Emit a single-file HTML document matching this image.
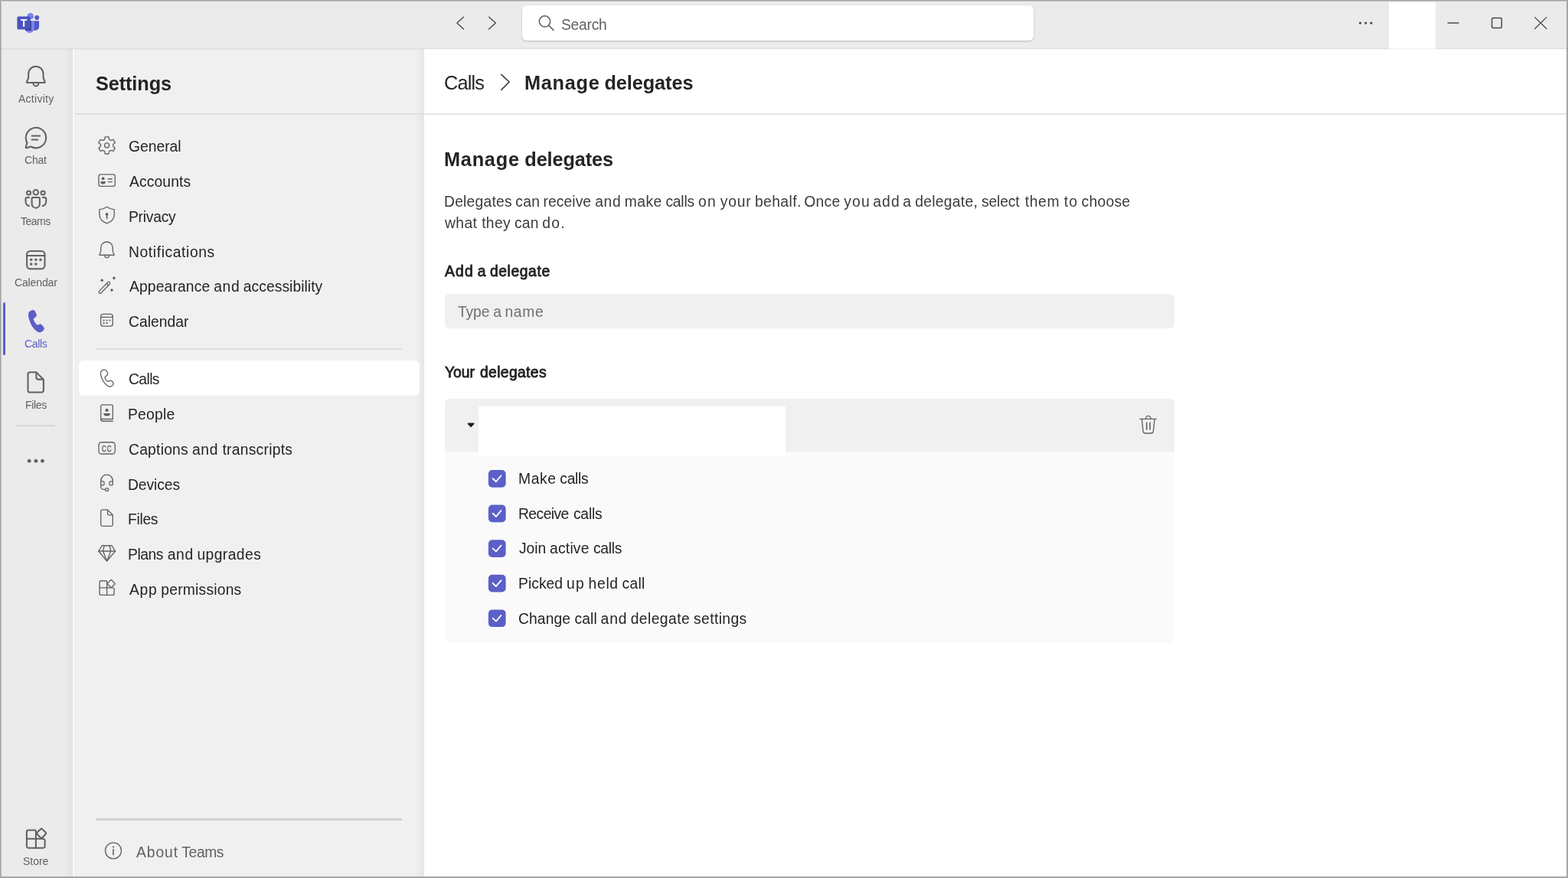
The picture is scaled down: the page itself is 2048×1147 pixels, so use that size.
<!DOCTYPE html>
<html lang="en">
<head>
<meta charset="utf-8">
<title>Settings - Calls - Manage delegates</title>
<style>
*{box-sizing:border-box;margin:0;padding:0}
html,body{width:2048px;height:1147px;overflow:hidden;background:#fff}
body{font-family:"Liberation Sans",sans-serif;color:#242424;position:relative;font-size:19.5px}
.a{position:absolute}
.t{position:absolute;white-space:nowrap;line-height:1;will-change:transform}
svg{position:absolute;overflow:visible}
#titlebar{left:0;top:0;width:2048px;height:64px;background:#ebebeb}
#tbline{left:0;top:62px;width:2048px;height:4px;background:linear-gradient(to bottom,rgba(0,0,0,.012) 0,rgba(0,0,0,.012) 1px,rgba(0,0,0,.05) 1px,rgba(0,0,0,.05) 2px,rgba(0,0,0,.025) 2px,rgba(0,0,0,.025) 3px,rgba(0,0,0,.008) 3px,rgba(0,0,0,.008) 4px);z-index:3}
#rail{left:0;top:64px;width:96px;height:1083px;background:linear-gradient(to right,#ebebeb 0,#ebebeb 84px,#e3e3e3 95px,#e3e3e3 96px)}
#panel{left:95px;top:64px;width:459px;height:1083px;background:linear-gradient(to right,#f9f9f9 0,#f9f9f9 1.5px,#f0f0f0 2.2px,#f0f0f0 447px,#e6e6e6 458.5px)}
#main{left:554px;top:64px;width:1494px;height:1083px;background:#fff}
.hl{height:2px;background:#e3e3e3}
.ck{left:637.9px;width:22.8px;height:22.8px;border-radius:5px;background:#5b5fc7}
#fT{left:0;top:0;width:2048px;height:2px;background:linear-gradient(to bottom,#a3a3a3 0,#a3a3a3 1px,#c4c4c4 1px,#c4c4c4 2px)}
#fL{left:0;top:0;width:2px;height:1147px;background:linear-gradient(to right,#a3a3a3 0,#a3a3a3 1px,#c0c0c0 1px,#c0c0c0 2px)}
#fB{left:0;top:1145px;width:2048px;height:2px;background:#a6a6a6}
#fR{left:2046px;top:0;width:2px;height:1147px;background:#a6a6a6}
</style>
</head>
<body>
<div class="a" id="titlebar"></div>
<div class="a" id="tbline"></div>
<div class="a" id="rail"></div>
<div class="a" id="panel"></div>
<div class="a" id="main"></div>

<!-- title bar -->
<div class="a" style="left:682px;top:7px;width:668px;height:46px;background:#fff;border-radius:6px;box-shadow:0 1px 2.5px rgba(0,0,0,.22)"></div>
<div class="t" style="left:732.98px;top:23px;font-size:19.3px;color:#616161;"><span style="letter-spacing:-0.274px;">Search</span></div>
<div class="a" style="left:1814px;top:2.6px;width:61.2px;height:61.4px;background:#fff"></div>
<!-- app rail -->
<div class="t" style="left:24.25px;top:122px;font-size:14px;color:#616161;"><span style="letter-spacing:0.264px;">Activity</span></div>
<div class="t" style="left:32.30px;top:202px;font-size:14px;color:#616161;"><span style="letter-spacing:-0.190px;">Chat</span></div>
<div class="t" style="left:27.25px;top:282px;font-size:14px;color:#616161;"><span style="letter-spacing:-0.484px;">Teams</span></div>
<div class="t" style="left:18.61px;top:362px;font-size:14px;color:#616161;"><span style="letter-spacing:-0.137px;">Calendar</span></div>
<div class="t" style="left:32.10px;top:442px;font-size:14px;color:#5b5fc7;"><span style="letter-spacing:-0.320px;">Calls</span></div>
<div class="t" style="left:32.50px;top:522px;font-size:14px;color:#616161;"><span style="letter-spacing:-0.300px;">Files</span></div>
<div class="t" style="left:30.16px;top:1118px;font-size:14px;color:#616161;"><span style="letter-spacing:-0.041px;">Store</span></div>
<div class="a" style="left:4px;top:395.4px;width:3.1px;height:68.4px;background:#5b5fc7;border-radius:2px"></div>
<div class="a" style="left:21.2px;top:554.8px;width:51px;height:1.8px;background:#d6d6d6"></div>
<!-- settings nav -->
<div class="t" style="left:125.31px;top:97px;font-size:25.3px;font-weight:bold;"><span style="letter-spacing:-0.104px;">Settings</span></div>
<div class="a" style="left:97px;top:148px;width:457px;height:2px;background:linear-gradient(to bottom,#e9e9e9 0,#e9e9e9 .5px,#dfdfdf .5px,#dfdfdf 2px)"></div>
<div class="a" style="left:102.6px;top:471.2px;width:445px;height:45.6px;background:#fff;border-radius:6px"></div>
<div class="t" style="left:167.80px;top:182px;font-size:19.3px;"><span>General</span></div>
<div class="t" style="left:168.76px;top:228px;font-size:19.3px;"><span style="letter-spacing:0.120px;">Accounts</span></div>
<div class="t" style="left:167.93px;top:274px;font-size:19.3px;"><span style="letter-spacing:-0.255px;">Privacy</span></div>
<div class="t" style="left:167.93px;top:320px;font-size:19.3px;"><span style="letter-spacing:0.598px;">Notifications</span></div>
<div class="t" style="left:168.56px;top:365px;font-size:19.3px;"><span style="letter-spacing:0.127px;">Appearance</span> <span style="letter-spacing:0.615px;margin-left:-0.43px;">and</span> <span style="letter-spacing:0.049px;margin-left:-0.79px;">accessibility</span></div>
<div class="t" style="left:167.90px;top:411px;font-size:19.3px;"><span style="letter-spacing:0.014px;">Calendar</span></div>
<div class="a" style="left:125.4px;top:455.2px;width:399.6px;height:1.8px;background:#dedede"></div>
<div class="t" style="left:168.20px;top:486px;font-size:19.3px;"><span style="letter-spacing:-0.595px;">Calls</span></div>
<div class="t" style="left:167.43px;top:532px;font-size:19.3px;"><span style="letter-spacing:0.234px;">People</span></div>
<div class="t" style="left:167.70px;top:578px;font-size:19.3px;"><span style="letter-spacing:0.230px;">Captions</span> <span style="letter-spacing:0.665px;margin-left:-0.45px;">and</span> <span style="letter-spacing:0.264px;margin-left:-0.03px;">transcripts</span></div>
<div class="t" style="left:167.43px;top:624px;font-size:19.3px;"><span style="letter-spacing:-0.088px;">Devices</span></div>
<div class="t" style="left:167.43px;top:669px;font-size:19.3px;"><span style="letter-spacing:-0.308px;">Files</span></div>
<div class="t" style="left:167.43px;top:715px;font-size:19.3px;"><span style="letter-spacing:-0.480px;">Plans</span> <span style="letter-spacing:0.615px;margin-left:0.55px;">and</span> <span style="letter-spacing:0.424px;margin-left:-0.71px;">upgrades</span></div>
<div class="t" style="left:168.66px;top:761px;font-size:19.3px;"><span style="letter-spacing:0.733px;">App</span> <span style="letter-spacing:0.202px;margin-left:-0.54px;">permissions</span></div>
<div class="a" style="left:125.4px;top:1069px;width:399.6px;height:3px;background:#d1d1d1"></div>
<div class="t" style="left:177.86px;top:1104px;font-size:19.3px;color:#616161;"><span style="letter-spacing:0.906px;">About</span> <span style="letter-spacing:-0.421px;margin-left:-0.93px;">Teams</span></div>
<!-- main -->
<div class="t" style="left:580.33px;top:96px;font-size:25.3px;"><span style="letter-spacing:-0.804px;">Calls</span></div>
<div class="t" style="left:685.00px;top:96px;font-size:25.3px;font-weight:bold;"><span style="letter-spacing:0.713px;">Manage</span> <span style="letter-spacing:-0.090px;margin-left:-1.00px;">delegates</span></div>
<div class="a" style="left:554px;top:148px;width:1494px;height:2px;background:linear-gradient(to bottom,#f3f3f3 0,#f3f3f3 .5px,#e6e6e6 .5px,#e6e6e6 2px)"></div>
<div class="t" style="left:580.29px;top:196px;font-size:25.3px;font-weight:bold;"><span style="letter-spacing:0.753px;">Manage</span> <span style="letter-spacing:-0.115px;margin-left:-0.43px;">delegates</span></div>
<div class="t" style="left:579.73px;top:254px;font-size:19.3px;color:#3b3b3b;"><span style="letter-spacing:0.224px;">Delegates</span> <span style="letter-spacing:0.353px;margin-left:-0.94px;">can</span> <span style="letter-spacing:0.061px;margin-left:-1.25px;">receive</span> <span style="letter-spacing:0.615px;margin-left:-0.24px;">and</span> <span style="letter-spacing:0.428px;margin-left:-0.90px;">make</span> <span style="letter-spacing:-0.200px;margin-left:-0.58px;">calls</span> <span style="letter-spacing:1.200px;margin-left:-0.34px;">on</span> <span style="letter-spacing:0.745px;margin-left:-0.39px;">your</span> <span style="letter-spacing:0.431px;margin-left:-0.82px;">behalf.</span> <span style="letter-spacing:0.300px;margin-left:-1.89px;">Once</span> <span style="letter-spacing:1.170px;margin-left:-0.71px;">you</span> <span style="letter-spacing:1.115px;margin-left:-1.96px;">add</span> <span style="margin-left:-1.79px;">a</span> <span style="letter-spacing:0.276px;margin-left:-0.26px;">delegate,</span> <span style="letter-spacing:-0.168px;margin-left:-0.38px;">select</span> <span style="letter-spacing:0.680px;margin-left:1.93px;">them</span> <span style="letter-spacing:1.200px;margin-left:0.05px;">to</span> <span style="letter-spacing:0.246px;margin-left:-0.93px;">choose</span></div>
<div class="t" style="left:581.20px;top:282px;font-size:19.3px;color:#3b3b3b;"><span style="letter-spacing:0.373px;">what</span> <span style="letter-spacing:0.340px;margin-left:0.59px;">they</span> <span style="letter-spacing:0.253px;margin-left:-0.45px;">can</span> <span style="letter-spacing:1.200px;margin-left:-0.82px;">do.</span></div>
<div class="t" style="left:581.19px;top:345px;font-size:19.3px;-webkit-text-stroke:0.8px #242424;"><span style="letter-spacing:1.150px;">Add</span> <span style="margin-left:-0.36px;">a</span> <span style="letter-spacing:0.606px;margin-left:0.06px;">delegate</span></div>
<div class="a" style="left:580.6px;top:384.2px;width:953.2px;height:45px;background:#f0f0f0;border-radius:6px"></div>
<div class="t" style="left:598.00px;top:398px;font-size:19.3px;color:#707070;"><span style="letter-spacing:-0.130px;">Type</span> <span style="margin-left:-0.49px;">a</span> <span style="letter-spacing:0.695px;margin-left:-0.83px;">name</span></div>
<div class="t" style="left:581.46px;top:477px;font-size:19.3px;-webkit-text-stroke:0.8px #242424;"><span style="letter-spacing:0.013px;">Your</span> <span style="letter-spacing:0.381px;margin-left:1.57px;">delegates</span></div>
<div class="a" style="left:580.6px;top:521px;width:953.2px;height:319.4px;background:#fafafa;border-radius:6px"></div>
<div class="a" style="left:580.6px;top:521px;width:953.2px;height:68.5px;background:#f0f0f0;border-radius:6px 6px 0 0"></div>
<div class="a" style="left:625px;top:531px;width:401.4px;height:64px;background:#fff"></div>
<div class="t" style="left:677.23px;top:616px;font-size:19.3px;"><span style="letter-spacing:0.567px;">Make</span> <span style="letter-spacing:-0.275px;margin-left:-0.52px;">calls</span></div>
<div class="t" style="left:677.23px;top:662px;font-size:19.3px;"><span style="letter-spacing:-0.553px;">Receive</span> <span style="letter-spacing:-0.175px;margin-left:0.72px;">calls</span></div>
<div class="t" style="left:677.68px;top:707px;font-size:19.3px;"><span style="letter-spacing:-0.053px;">Join</span> <span style="letter-spacing:0.190px;margin-left:-0.45px;">active</span> <span style="letter-spacing:-0.275px;margin-left:-0.06px;">calls</span></div>
<div class="t" style="left:677.23px;top:753px;font-size:19.3px;"><span style="letter-spacing:0.041px;">Picked</span> <span style="letter-spacing:1.200px;margin-left:-0.49px;">up</span> <span style="letter-spacing:0.678px;margin-left:-0.65px;">held</span> <span style="letter-spacing:0.323px;margin-left:-0.66px;">call</span></div>
<div class="t" style="left:677.10px;top:799px;font-size:19.3px;"><span style="letter-spacing:0.104px;">Change</span> <span style="letter-spacing:0.123px;margin-left:-0.14px;">call</span> <span style="letter-spacing:0.965px;margin-left:-0.73px;">and</span> <span style="letter-spacing:0.441px;margin-left:-1.30px;">delegate</span> <span style="letter-spacing:0.382px;margin-left:-0.46px;">settings</span></div>
<svg id="icons" width="2048" height="1147" viewBox="0 0 2048 1147" style="left:0;top:0">
<g>
<circle cx="39.7" cy="21.2" r="4.3" fill="#7b83eb"/>
<circle cx="48.2" cy="23" r="2.95" fill="#5059c9"/>
<path d="M43 27.2H50A1.1 1.1 0 0 1 51.1 28.3V34.6A5.1 5.1 0 0 1 46 39.7H43Z" fill="#5059c9"/>
<path d="M32.3 27.2H43.8A1.1 1.1 0 0 1 44.9 28.3V36.6A6.3 6.3 0 0 1 32.3 36.6Z" fill="#7b83eb"/>
<path d="M33 27.2H41V38.5A1.5 1.5 0 0 1 39.5 40H33Z" fill="#3b4192"/>
<rect x="22.4" y="21.4" width="17.3" height="17.1" rx="1.6" fill="#4b53bc"/>
<text x="31.1" y="35.0" font-family="'Liberation Sans',sans-serif" font-weight="bold" font-size="14.2" text-anchor="middle" fill="#fff">T</text>
</g>
<g fill="none" stroke="#484848" stroke-width="1.4" stroke-linecap="round" stroke-linejoin="round">
<path d="M605.5 22.2L596.9 30.1L605.5 38.1"/><path d="M638.6 22.2L647.4 30.1L638.6 38.1"/>
<path d="M1891.2 30.1H1905" stroke-width="1.5"/><rect x="1948.6" y="23.6" width="12.8" height="12.8" rx="1.8" stroke-width="1.5"/>
<path d="M2004.7 22.6L2019.9 37.5M2019.9 22.6L2004.7 37.5" stroke-width="1.3"/>
</g>
<g fill="none" stroke="#616161" stroke-width="1.5" stroke-linecap="round"><circle cx="711.5" cy="27.9" r="7.1"/><path d="M716.7 33.1L723 39.4"/></g>
<g fill="#4d4d4d"><circle cx="1776.6" cy="30.1" r="1.7"/><circle cx="1783.8" cy="30.1" r="1.7"/><circle cx="1791" cy="30.1" r="1.7"/></g>
<g fill="none" stroke="#616161" stroke-width="2.05" stroke-linecap="round" stroke-linejoin="round">
<path d="M37.2 100V96.3A9.65 9.65 0 0 1 56.5 96.3V100C56.5 102.2 57 103.6 58 105.3L58.8 106.9A.75 .75 0 0 1 58.1 108H35.6A.75 .75 0 0 1 34.9 106.9L35.7 105.3C36.7 103.6 37.2 102.2 37.2 100Z"/>
<path d="M43.5 108.8A3.4 3.7 0 0 0 50.3 108.8"/>
<path d="M40.4 191.5A13.2 13.2 0 1 0 35.4 186.4L33.7 192.3A.8 .8 0 0 0 34.7 193.3Z"/><path d="M41.6 177.4H52.2M41.6 182.4H49.2"/>
<circle cx="46.8" cy="251.3" r="3.25"/><circle cx="37.5" cy="252" r="2.55"/><circle cx="56.1" cy="252" r="2.55"/>
<path d="M43 257.9H50.6A1.3 1.3 0 0 1 51.9 259.2V266.5A5.15 5.15 0 0 1 41.6 266.5V259.2A1.3 1.3 0 0 1 43 257.9Z"/>
<path d="M38.8 257.9H35A1.5 1.5 0 0 0 33.5 259.4V263.6A5.4 5.4 0 0 0 38.9 269" stroke-linecap="butt"/><path d="M54.8 257.9H58.7A1.5 1.5 0 0 1 60.2 259.4V263.6A5.4 5.4 0 0 1 54.8 269" stroke-linecap="butt"/>
<rect x="35.1" y="327.9" width="23.4" height="23.4" rx="4.6"/><path d="M35.1 333.9H58.5"/>
<path d="M39.5 486.3H46.6A2 2 0 0 1 48 486.9L56.3 495.2A2 2 0 0 1 56.9 496.6V509.9A2.6 2.6 0 0 1 54.3 512.5H39.1A2.6 2.6 0 0 1 36.5 509.9V488.9A2.6 2.6 0 0 1 39.1 486.3Z"/><path d="M47.4 486.8V493.2A2.4 2.4 0 0 0 49.8 495.6H56.4"/>
<path d="M34.9 1105.5V1086.7A2.3 2.3 0 0 1 37.2 1084.4H45.6A1.3 1.3 0 0 1 46.9 1085.7V1095.7H56.3A2.3 2.3 0 0 1 58.6 1098V1105.5A2.3 2.3 0 0 1 56.3 1107.8H37.2A2.3 2.3 0 0 1 34.9 1105.5Z"/><path d="M34.9 1095.7H46.9V1107.8"/>
<rect x="-4.7" y="-4.7" width="9.4" height="9.4" rx="1.6" transform="translate(54.1 1088.7) rotate(45)" fill="#ebebeb"/>
</g>
<g fill="#616161"><circle cx="40.7" cy="339.3" r="1.75"/><circle cx="46.8" cy="339.3" r="1.75"/><circle cx="53" cy="339.3" r="1.75"/><circle cx="40.7" cy="345.1" r="1.75"/><circle cx="46.8" cy="345.1" r="1.75"/>
<circle cx="38.2" cy="602.2" r="2.4"/><circle cx="46.9" cy="602.2" r="2.4"/><circle cx="55.4" cy="602.2" r="2.4"/></g>
<path d="M43.24 404.99C44.05 405.05 44.57 404.99 45.33 406.04C46.08 407.09 47.54 409.93 47.77 411.27C48.00 412.61 47.38 413.13 46.72 414.06C46.06 414.99 44.03 415.74 43.79 416.85C43.56 417.95 44.49 419.40 45.33 420.68C46.16 421.96 47.65 424.08 48.81 424.52C49.98 424.96 51.37 423.39 52.30 423.33C53.23 423.28 53.52 423.39 54.39 424.17C55.26 424.95 57.01 426.96 57.53 428.01C58.05 429.05 58.05 429.52 57.53 430.45C57.01 431.38 55.32 432.95 54.39 433.58C53.46 434.22 52.88 434.34 51.95 434.28C51.02 434.22 50.03 433.99 48.81 433.24C47.59 432.48 46.03 431.38 44.63 429.75C43.24 428.12 41.61 425.80 40.45 423.47C39.28 421.15 38.24 417.89 37.66 415.80C37.08 413.71 36.90 412.32 36.96 410.92C37.02 409.53 37.42 408.31 38.01 407.43C38.59 406.56 39.57 406.10 40.45 405.69C41.32 405.28 42.42 404.93 43.24 404.99Z" fill="#5b5fc7"/>
<g fill="none" stroke="#636363" stroke-width="1.35" stroke-linecap="round" stroke-linejoin="round">
<path d="M136.63 182.15 L137.25 178.85 L141.95 178.85 L142.57 182.15 L144.82 183.45 L148.00 182.34 L150.35 186.41 L147.80 188.60 L147.80 191.20 L150.35 193.39 L148.00 197.46 L144.82 196.35 L142.57 197.65 L141.95 200.95 L137.25 200.95 L136.63 197.65 L134.38 196.35 L131.20 197.46 L128.85 193.39 L131.40 191.20 L131.40 188.60 L128.85 186.41 L131.20 182.34 L134.38 183.45Z" stroke-linejoin="round"/><circle cx="139.6" cy="189.9" r="3"/>
<rect x="129" y="227.8" width="21.3" height="15.5" rx="2.6"/><path d="M141.3 233.7H146.4M141.3 237.6H146.4"/>
<path d="M139.6 270.3C136.6 272.4 133.4 273.5 129.9 273.8V280C129.9 285.6 133.3 289.6 139.6 291.9C145.9 289.6 149.3 285.6 149.3 280V273.8C145.8 273.5 142.6 272.4 139.6 270.3Z"/><path d="M139.6 280V285.3" stroke-width="1.7"/>
<path d="M131.7 327V323.8A7.8 7.8 0 0 1 147.3 323.8V327C147.3 328.7 147.7 329.8 148.4 331.1L149.1 332.3A.6 .6 0 0 1 148.6 333.2H130.4A.6 .6 0 0 1 129.9 332.3L130.6 331.1C131.3 329.8 131.7 328.7 131.7 327Z"/><path d="M136.8 333.8A2.8 2.9 0 0 0 142.4 333.8"/>
<path d="M130.7 381.6L142 370" stroke-width="4.7"/><path d="M130.7 381.6L142 370" stroke="#f0f0f0" stroke-width="2.1"/><path d="M139.2 370.6L141.5 372.9" stroke-linecap="butt"/>
<rect x="131.6" y="410.4" width="15.7" height="15.7" rx="3.1"/><path d="M131.6 414.3H147.3"/>
<path d="M136.32 482.93C137.36 482.89 138.11 483.52 138.83 484.34C139.55 485.17 140.53 486.83 140.63 487.88C140.74 488.92 140.04 489.77 139.46 490.62C138.87 491.47 137.30 492.06 137.10 492.98C136.91 493.89 137.60 495.24 138.28 496.12C138.96 496.99 140.20 498.08 141.18 498.24C142.16 498.39 143.28 497.06 144.17 497.06C145.06 497.06 145.84 497.54 146.52 498.24C147.20 498.93 148.22 500.29 148.25 501.22C148.27 502.15 147.46 503.18 146.68 503.81C145.89 504.44 144.74 505.09 143.54 504.99C142.33 504.88 140.79 504.20 139.46 503.18C138.12 502.16 136.68 500.57 135.53 498.87C134.38 497.16 133.23 494.81 132.55 492.98C131.87 491.15 131.45 489.28 131.45 487.88C131.45 486.48 131.74 485.40 132.55 484.58C133.36 483.76 135.27 482.97 136.32 482.93Z"/>
<path d="M133.9 528.8H145.3A2 2 0 0 1 147.3 530.8V547.5H131.7V531A2.2 2.2 0 0 1 133.9 528.8Z"/><path d="M131.7 547.5A2.7 2.7 0 0 0 134.4 550.2H147.3"/>
<rect x="129" y="577.7" width="21.3" height="15.3" rx="3.6"/>
<path d="M131.7 633.9V628A7.8 7.8 0 0 1 147.3 628V632.4"/><path d="M131.7 628.8H134.5A1.5 1.5 0 0 1 136 630.3V632.4A1.5 1.5 0 0 1 134.5 633.9H131.7"/><path d="M147.3 628.8H144.5A1.5 1.5 0 0 0 143 630.3V632.4A1.5 1.5 0 0 0 144.5 633.9H145.8A1.5 1.5 0 0 0 147.3 632.4"/><path d="M131.7 633.9V635.8A3.6 3.6 0 0 0 135.3 639.4H137.6"/><circle cx="139.7" cy="639.6" r="2.05"/>
<path d="M134 665.9H139.9A1.6 1.6 0 0 1 141 666.4L146.8 672.2A1.6 1.6 0 0 1 147.3 673.3V685A2.3 2.3 0 0 1 145 687.3H134A2.3 2.3 0 0 1 131.7 685V668.2A2.3 2.3 0 0 1 134 665.9Z"/><path d="M140.5 666.3V670.8A2 2 0 0 0 142.5 672.8H146.9"/>
<path d="M133.4 712.7H146L150.6 720L139.6 733L128.7 720Z"/><path d="M128.7 720H150.6M136.2 712.7L134.6 720L139.6 733M143.1 712.7L144.7 720L139.6 733"/>
<path d="M130.1 775.4V760.6A1.9 1.9 0 0 1 132 758.7H138.6A1 1 0 0 1 139.6 759.7V767.9H147.2A1.9 1.9 0 0 1 149.1 769.8V775.4A1.9 1.9 0 0 1 147.2 777.3H132A1.9 1.9 0 0 1 130.1 775.4Z"/><path d="M130.1 767.9H139.6V777.3"/>
<rect x="-3.75" y="-3.75" width="7.5" height="7.5" rx="1.1" transform="translate(145.2 762.5) rotate(45)" fill="#f0f0f0"/>
<circle cx="148" cy="1111.3" r="10.5"/><path d="M148 1109.6V1116.6" stroke-width="1.6"/>
<path d="M1488.9 547.4H1510.3M1496.6 547.2A3.25 3.9 0 0 1 1503.1 547.2"/><path d="M1491.4 547.6L1492.9 562.6A3.6 3.6 0 0 0 1496.5 566H1502.9A3.6 3.6 0 0 0 1506.5 562.6L1508 547.6"/><path d="M1497.7 552.3V561M1502 552.3V561" stroke-width="1.6"/>
</g>
<g fill="#616161">
<circle cx="134.6" cy="233.3" r="1.95"/><path d="M131.3 236.9H137.9V237.6A3.3 2.9 0 0 1 131.3 237.6Z"/>
<circle cx="139.6" cy="279.8" r="1.9"/>
<path d="M133.2 364.2Q133.7 365.7 135.2 366.2Q133.7 366.7 133.2 368.2Q132.7 366.7 131.2 366.2Q132.7 365.7 133.2 364.2Z" stroke="#616161" stroke-width=".6" stroke-linejoin="round"/>
<path d="M148.9 361.2Q149.425 362.77500000000003 151.0 363.3Q149.425 363.825 148.9 365.40000000000003Q148.375 363.825 146.8 363.3Q148.375 362.77500000000003 148.9 361.2Z" stroke="#616161" stroke-width=".6" stroke-linejoin="round"/>
<path d="M146 377.0Q146.5 378.5 148.0 379Q146.5 379.5 146 381.0Q145.5 379.5 144.0 379Q145.5 378.5 146 377.0Z" stroke="#616161" stroke-width=".6" stroke-linejoin="round"/>
<circle cx="135.6" cy="418.6" r="1.1"/>
<circle cx="139.6" cy="418.6" r="1.1"/>
<circle cx="143.6" cy="418.6" r="1.1"/>
<circle cx="135.6" cy="422.2" r="1.1"/>
<circle cx="139.6" cy="422.2" r="1.1"/>
<circle cx="139.6" cy="535.9" r="2.15"/><path d="M135.3 539.9H143.9V540.3A4.3 3.2 0 0 1 135.3 540.3Z"/>
<circle cx="148" cy="1106.4" r="1.05"/>
<text transform="translate(139.75 589.5) scale(.68 1)" font-family="'Liberation Sans',sans-serif" font-size="11.8" text-anchor="middle" letter-spacing="1.6" stroke="#616161" stroke-width=".45">CC</text>
</g>
<path d="M654.7 97.3L665.1 107.1L654.7 117.5" fill="none" stroke="#242424" stroke-width="1.4" stroke-linecap="round" stroke-linejoin="round"/>
<path d="M611.6 552.5H618.6A.9 .9 0 0 1 619.3 554L615.8 557.7A.95 .95 0 0 1 614.4 557.7L610.9 554A.9 .9 0 0 1 611.6 552.5Z" fill="#1f1f1f"/>
<rect x="637.9" y="614.0" width="22.7" height="22.7" rx="5" fill="#5b5fc7"/>
<path d="M643.7 625.2L647.9 629.2L654.4 621.5" fill="none" stroke="#fff" stroke-width="1.9" stroke-linecap="round" stroke-linejoin="round"/>
<rect x="637.9" y="659.6" width="22.7" height="22.7" rx="5" fill="#5b5fc7"/>
<path d="M643.7 670.8L647.9 674.8L654.4 667.1" fill="none" stroke="#fff" stroke-width="1.9" stroke-linecap="round" stroke-linejoin="round"/>
<rect x="637.9" y="705.2" width="22.7" height="22.7" rx="5" fill="#5b5fc7"/>
<path d="M643.7 716.4L647.9 720.4L654.4 712.7" fill="none" stroke="#fff" stroke-width="1.9" stroke-linecap="round" stroke-linejoin="round"/>
<rect x="637.9" y="750.8" width="22.7" height="22.7" rx="5" fill="#5b5fc7"/>
<path d="M643.7 762.0L647.9 766.0L654.4 758.3" fill="none" stroke="#fff" stroke-width="1.9" stroke-linecap="round" stroke-linejoin="round"/>
<rect x="637.9" y="796.4" width="22.7" height="22.7" rx="5" fill="#5b5fc7"/>
<path d="M643.7 807.6L647.9 811.6L654.4 803.9" fill="none" stroke="#fff" stroke-width="1.9" stroke-linecap="round" stroke-linejoin="round"/>
</svg>
<div class="a" id="fT"></div><div class="a" id="fL"></div><div class="a" id="fB"></div><div class="a" id="fR"></div>
</body>
</html>
